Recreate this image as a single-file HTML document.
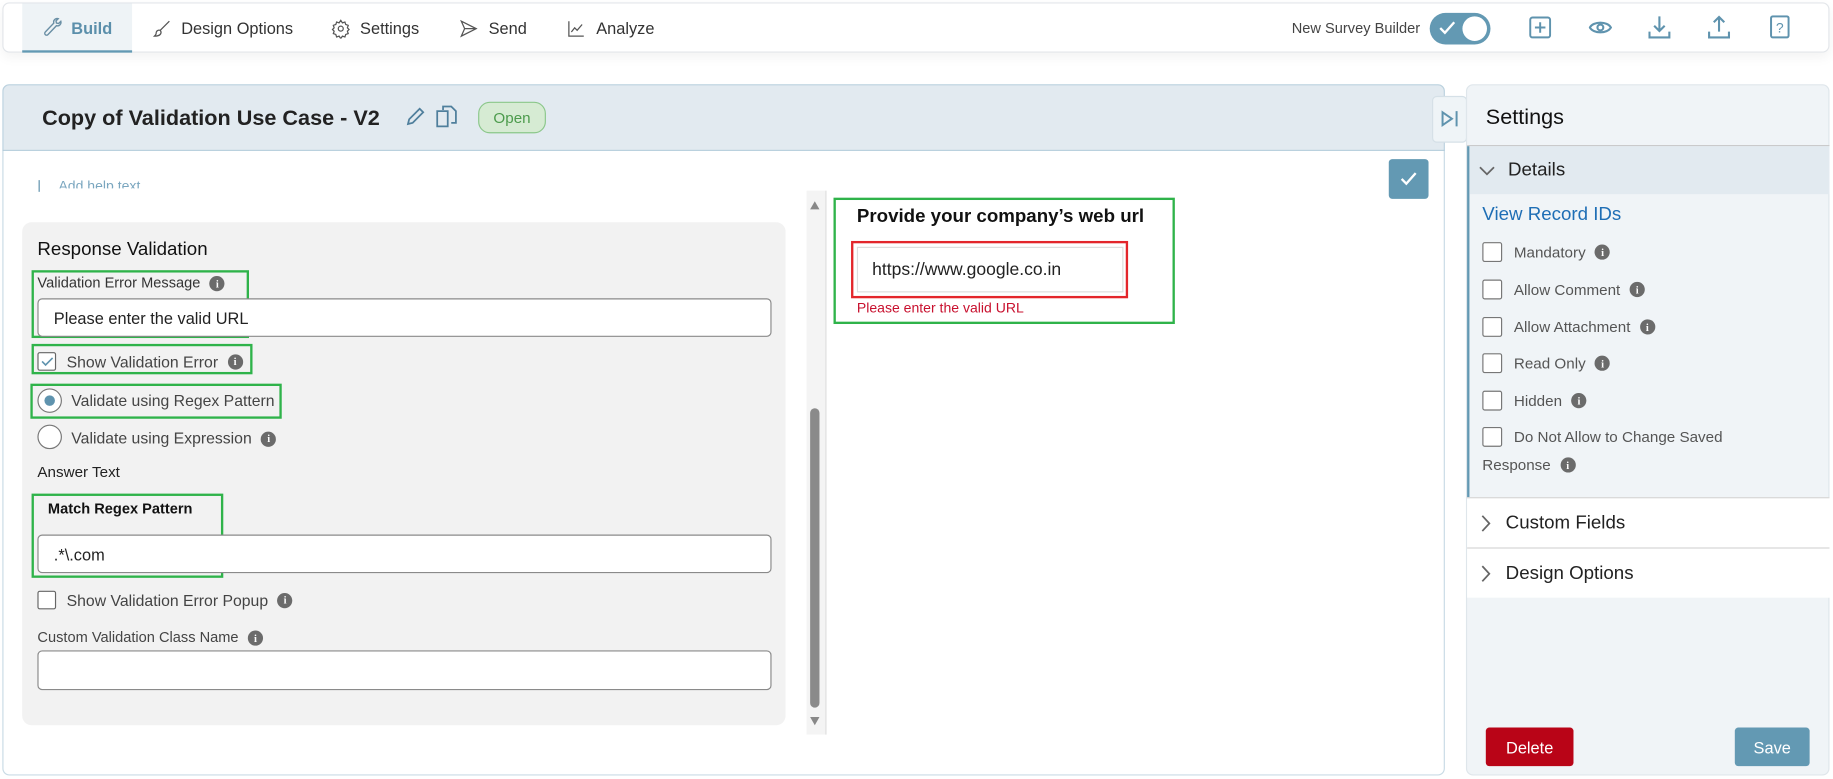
<!DOCTYPE html>
<html><head><meta charset="utf-8"><style>
*{box-sizing:border-box;margin:0;padding:0}
html,body{width:1833px;height:779px;overflow:hidden;background:#fff}
#w{position:absolute;left:0;top:0;width:1568px;height:666px;transform:scale(1.16901,1.1697);transform-origin:0 0;font-family:"Liberation Sans",sans-serif;color:#333}
.a{position:absolute}
.nav{left:2px;top:2px;width:1563px;height:43px;border:1px solid #e3e6ea;border-radius:6px;background:#fff;box-shadow:0 4px 10px rgba(0,0,0,.05)}
.tab{top:3px;height:42px;display:flex;align-items:center;font-size:14px;color:#333;gap:8px}
.ib{display:inline-flex;width:13px;height:13px;border-radius:50%;background:#6b6b6b;color:#fff;font-size:9px;font-weight:bold;align-items:center;justify-content:center;font-family:"Liberation Serif",serif;vertical-align:middle;margin-left:8px}
.cb{display:inline-block;width:15px;height:15px;border:1px solid #666;border-radius:2px;background:#fff;vertical-align:middle}
.g{border:2px solid #2fb34a}
.inp{background:#fff;border:1px solid #8a8a8a;border-radius:4px}
.lbl{font-size:13px;color:#333}
.srow{left:1268px;font-size:13px;color:#555;display:flex;align-items:center}
.srow .cb{margin-right:10px;width:17px;height:17px;border-color:#777}
</style></head><body><div id="w">
<div class="a nav"></div>
<div class="a" style="left:19px;top:3px;width:94px;height:42px;background:#eef3f6;border-bottom:2px solid #6399b3"></div>
<div class="a tab" style="left:35px;color:#5b8fab;font-weight:bold"><svg width="18" height="18" viewBox="0 0 24 24" fill="none" stroke="#6a8fa5" stroke-width="1.6"><path d="M14.7 6.3a4 4 0 0 1 5-5l-2.5 2.5.5 2.5 2.5.5 2.5-2.5a4 4 0 0 1-5 5L8 19.5a2 2 0 0 1-3-3z"/></svg>Build</div>
<div class="a tab" style="left:130px"><svg width="17" height="17" viewBox="0 0 24 24" fill="none" stroke="#555" stroke-width="1.5"><path d="M21 3 10 14M10 14c-3-1-5 1-5 4 0 1-1 2-2 3 4 0 8-1 8-5z"/></svg>Design Options</div>
<div class="a tab" style="left:283px"><svg width="17" height="17" viewBox="0 0 24 24" fill="none" stroke="#555" stroke-width="1.5"><circle cx="12" cy="12" r="3"/><path d="M12 2l2 3 3-1 1 3 3 1-1 3 2 2-2 2 1 3-3 1-1 3-3-1-2 3-2-3-3 1-1-3-3-1 1-3-2-2 2-2-1-3 3-1 1-3 3 1z"/></svg>Settings</div>
<div class="a tab" style="left:392px"><svg width="18" height="17" viewBox="0 0 24 24" fill="none" stroke="#555" stroke-width="1.5"><path d="M3 3l18 9-18 9 4-9z M7 12h14"/></svg>Send</div>
<div class="a tab" style="left:484px"><svg width="18" height="17" viewBox="0 0 24 24" fill="none" stroke="#555" stroke-width="1.5"><path d="M3 3v18h18M6 16l4-5 3 3 6-7"/></svg>Analyze</div>
<div class="a" style="left:1105px;top:17px;font-size:12.5px;color:#444">New Survey Builder</div>
<div class="a" style="left:1223px;top:11px;width:52px;height:27px;border-radius:14px;background:#6399b3"><svg class="a" style="left:8px;top:7px" width="14" height="13" viewBox="0 0 14 13" fill="none" stroke="#fff" stroke-width="2"><path d="M1 6l4 4 8-9"/></svg><div class="a" style="right:3px;top:3px;width:21px;height:21px;border-radius:50%;background:#fff"></div></div>
<svg class="a" style="left:1308px;top:14px" width="19" height="19" viewBox="0 0 19 19" fill="none" stroke="#5f93ae" stroke-width="1.7"><rect x="1" y="1" width="17" height="17" rx="2"/><path d="M9.5 5v9M5 9.5h9"/></svg>
<svg class="a" style="left:1359px;top:16px" width="20" height="15" viewBox="0 0 20 15" fill="none" stroke="#5f93ae" stroke-width="1.8"><path d="M1 7.5C4 2 16 2 19 7.5 16 13 4 13 1 7.5z"/><circle cx="10" cy="7.5" r="2.5"/></svg>
<svg class="a" style="left:1410px;top:13px" width="19" height="20" viewBox="0 0 19 20" fill="none" stroke="#5f93ae" stroke-width="1.8"><path d="M9.5 1v12M5 9l4.5 4.5L14 9M1 14v5h17v-5"/></svg>
<svg class="a" style="left:1461px;top:13px" width="19" height="20" viewBox="0 0 19 20" fill="none" stroke="#5f93ae" stroke-width="1.8"><path d="M9.5 14V2M5 6l4.5-4.5L14 6M1 14v5h17v-5"/></svg>
<svg class="a" style="left:1514px;top:13px" width="17" height="20" viewBox="0 0 17 20" fill="none" stroke="#5f93ae" stroke-width="1.7"><rect x="1" y="1" width="15" height="18" rx="1.5"/><text x="8.5" y="15" font-size="12" text-anchor="middle" fill="#5f93ae" stroke="none" font-family="Liberation Sans">?</text></svg>

<div class="a" style="left:2px;top:72px;width:1234px;height:591px;border:1px solid #c9dbe5;border-radius:6px;background:#fff"></div>
<div class="a" style="left:2px;top:72px;width:1234px;height:57px;background:#e2eaf0;border:1px solid #bcd2df;border-bottom:1px solid #a9c5d6;border-radius:6px 6px 0 0"></div>
<div class="a" style="left:36px;top:90px;font-size:18.5px;font-weight:bold;color:#222">Copy of Validation Use Case - V2</div>
<svg class="a" style="left:346px;top:91px" width="18" height="18" viewBox="0 0 18 18" fill="none" stroke="#4f7f9c" stroke-width="1.5"><path d="M3 15l1-4L13 2l3 3-9 9z"/></svg>
<svg class="a" style="left:372px;top:89px" width="20" height="21" viewBox="0 0 20 21" fill="none" stroke="#4f7f9c" stroke-width="1.5"><path d="M7 5V2h7l4 4v10H14M2 6h9v13H2z"/></svg>
<div class="a" style="left:409px;top:87px;width:58px;height:27px;border:1px solid #8bc78a;border-radius:10px;background:#d6ebd3;color:#4c9b4c;font-size:13px;display:flex;align-items:center;justify-content:center">Open</div>
<div class="a" style="left:1225px;top:82px;width:30px;height:40px;background:#eff4f7;border:1px solid #d5e0e7;border-radius:4px"></div>
<svg class="a" style="left:1232px;top:94px" width="16" height="15" viewBox="0 0 16 15" fill="none" stroke="#5f93ae" stroke-width="1.7"><path d="M2 2l8 5.5L2 13zM14 1v13"/></svg>
<div class="a" style="left:1188px;top:136px;width:34px;height:34px;background:#6399b3;border-radius:3px"><svg class="a" style="left:10px;top:11px" width="14" height="12" viewBox="0 0 14 12" fill="none" stroke="#fff" stroke-width="2"><path d="M1 6l4 4 8-9"/></svg></div>

<div class="a" style="left:33px;top:154px;width:1px;height:10px;background:#5b8fab"></div>
<div class="a" style="left:50px;top:152px;font-size:12px;color:#7aa6bf;height:9px;overflow:hidden">Add help text</div>

<div class="a" style="left:19px;top:190px;width:653px;height:430px;background:#f2f2f2;border-radius:8px"></div>
<div class="a" style="left:32px;top:205px;font-size:16px;color:#111">Response Validation</div>
<div class="a g" style="left:27px;top:231px;width:186px;height:58px"></div>
<div class="a lbl" style="left:32px;top:235px;font-size:12.5px">Validation Error Message<span class="ib">i</span></div>
<div class="a inp" style="left:32px;top:255px;width:628px;height:33px;font-size:14px;padding:8px 13px;color:#222">Please enter the valid URL</div>
<div class="a g" style="left:27px;top:294px;width:189px;height:26px"></div>
<div class="a lbl" style="left:32px;top:301px;font-size:13.5px;color:#444;display:flex;align-items:center"><span class="cb" style="width:16px;height:16px;position:relative;margin-right:9px"><svg class="a" style="left:2px;top:3px" width="11" height="9" viewBox="0 0 11 9" fill="none" stroke="#5f93ae" stroke-width="1.4"><path d="M1 4l3 3 6-6"/></svg></span>Show Validation Error<span class="ib">i</span></div>
<div class="a g" style="left:26px;top:328px;width:215px;height:30px"></div>
<div class="a" style="left:32px;top:332px;width:21px;height:21px;border:1px solid #777;border-radius:50%;background:#fff"><div class="a" style="left:5px;top:5px;width:9px;height:9px;border-radius:50%;background:#5f93ae"></div></div>
<div class="a lbl" style="left:61px;top:335px;font-size:13.5px;color:#444">Validate using Regex Pattern</div>
<div class="a" style="left:32px;top:363px;width:21px;height:21px;border:1px solid #777;border-radius:50%;background:#fff"></div>
<div class="a lbl" style="left:61px;top:367px;font-size:13.5px;color:#444">Validate using Expression<span class="ib">i</span></div>
<div class="a lbl" style="left:32px;top:396px;font-size:13px;color:#222">Answer Text</div>
<div class="a g" style="left:27px;top:422px;width:164px;height:72px"></div>
<div class="a" style="left:41px;top:428px;font-size:12.5px;font-weight:bold;color:#111">Match Regex Pattern</div>
<div class="a inp" style="left:32px;top:457px;width:628px;height:33px;font-size:14px;padding:8px 13px;color:#222">.*\.com</div>
<div class="a lbl" style="left:32px;top:505px;font-size:13.5px;color:#444;display:flex;align-items:center"><span class="cb" style="width:16px;height:16px;margin-right:9px"></span>Show Validation Error Popup<span class="ib">i</span></div>
<div class="a lbl" style="left:32px;top:538px;font-size:12.5px;color:#444">Custom Validation Class Name<span class="ib">i</span></div>
<div class="a inp" style="left:32px;top:556px;width:628px;height:34px"></div>

<div class="a" style="left:690px;top:163px;width:16px;height:465px;background:#f4f4f4"></div>
<div class="a" style="left:706px;top:163px;width:1px;height:465px;background:#ddd"></div>
<div class="a" style="left:693px;top:349px;width:8px;height:256px;background:#8a8a8a;border-radius:4px"></div>
<svg class="a" style="left:692px;top:171px" width="10" height="9"><path d="M5 1L9 8H1z" fill="#888"/></svg>
<svg class="a" style="left:692px;top:612px" width="10" height="9"><path d="M5 8L9 1H1z" fill="#888"/></svg>

<div class="a g" style="left:713px;top:169px;width:292px;height:108px"></div>
<div class="a" style="left:733px;top:177px;font-size:16px;font-weight:bold;color:#111">Provide your company’s web url</div>
<div class="a" style="left:728px;top:206px;width:237px;height:49px;border:2px solid #e3262b"></div>
<div class="a" style="left:733px;top:211px;width:228px;height:39px;background:#fff;border:1px solid #ddd;font-size:15px;color:#222;padding:10px 12px">https://www.google.co.in</div>
<div class="a" style="left:733px;top:256px;font-size:12px;color:#c8102e">Please enter the valid URL</div>

<div class="a" style="left:1254px;top:72px;width:311px;height:591px;background:#f0f4f7;border:1px solid #dfe6eb;border-radius:6px"></div>
<div class="a" style="left:1271px;top:89px;font-size:18.5px;color:#111">Settings</div>
<div class="a" style="left:1255px;top:124px;width:310px;height:1px;background:#c9c9c9"></div>
<div class="a" style="left:1255px;top:125px;width:310px;height:301px;border-left:2px solid #6399b3"></div>
<div class="a" style="left:1257px;top:125px;width:308px;height:41px;background:#e2eaf0"></div>
<svg class="a" style="left:1265px;top:141px" width="14" height="10" viewBox="0 0 14 10" fill="none" stroke="#666" stroke-width="1.5"><path d="M1 2l6 6 6-6"/></svg>
<div class="a" style="left:1290px;top:137px;font-size:16px;color:#222">Details</div>
<div class="a" style="left:1268px;top:175px;font-size:16px;color:#1e6eb5">View Record IDs</div>
<div class="a srow" style="top:207px"><span class="cb"></span>Mandatory<span class="ib">i</span></div>
<div class="a srow" style="top:239px"><span class="cb"></span>Allow Comment<span class="ib">i</span></div>
<div class="a srow" style="top:271px"><span class="cb"></span>Allow Attachment<span class="ib">i</span></div>
<div class="a srow" style="top:302px"><span class="cb"></span>Read Only<span class="ib">i</span></div>
<div class="a srow" style="top:334px"><span class="cb"></span>Hidden<span class="ib">i</span></div>
<div class="a srow" style="top:365px"><span class="cb"></span>Do Not Allow to Change Saved</div>
<div class="a srow" style="top:390px">Response<span class="ib">i</span></div>
<div class="a" style="left:1255px;top:425px;width:310px;height:86px;background:#fff;border-top:1px solid #d5d5d5"></div>
<div class="a" style="left:1255px;top:468px;width:310px;height:1px;background:#d5d5d5"></div>
<svg class="a" style="left:1266px;top:440px" width="9" height="15" viewBox="0 0 9 15" fill="none" stroke="#666" stroke-width="1.5"><path d="M2 1l6 6.5L2 14"/></svg>
<div class="a" style="left:1288px;top:439px;font-size:16px;color:#222">Custom Fields</div>
<svg class="a" style="left:1266px;top:483px" width="9" height="15" viewBox="0 0 9 15" fill="none" stroke="#666" stroke-width="1.5"><path d="M2 1l6 6.5L2 14"/></svg>
<div class="a" style="left:1288px;top:482px;font-size:16px;color:#222">Design Options</div>
<div class="a" style="left:1271px;top:622px;width:75px;height:33px;background:#b90417;border-radius:3px;color:#fff;font-size:14px;display:flex;align-items:center;justify-content:center">Delete</div>
<div class="a" style="left:1484px;top:622px;width:64px;height:33px;background:#6399b3;border-radius:3px;color:#fff;font-size:14px;display:flex;align-items:center;justify-content:center">Save</div>
</div></body></html>
